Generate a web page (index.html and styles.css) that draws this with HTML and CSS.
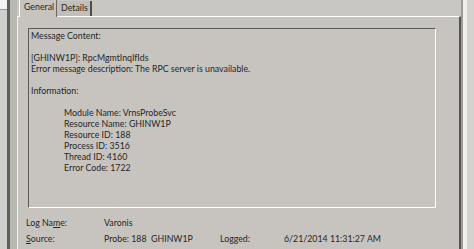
FILE: index.html
```html
<!DOCTYPE html>
<html>
<head>
<meta charset="utf-8">
<link rel="stylesheet" href="styles.css">
</head>
<body>
<div class="window">
  <div class="frame-left">
    <div class="corner"></div>
  </div>
  <div class="frame-dark"></div>
  <div class="frame-grey"></div>
  <div class="tabctl">
    <div class="tabs">
      <div class="tab tab-active">General</div>
      <div class="tab tab-idle">Details</div>
    </div>
    <div class="page">
      <div class="group">
        <div class="line">Message Content:</div>
        <div class="line blank"></div>
        <div class="line">[GHINW1P]: RpcMgmtInqIfIds</div>
        <div class="line">Error message description: The RPC server is unavailable.</div>
        <div class="line blank"></div>
        <div class="line">Information:</div>
        <div class="line blank"></div>
        <div class="info">
          <div class="line">Module Name: VrnsProbeSvc</div>
          <div class="line">Resource Name: GHINW1P</div>
          <div class="line">Resource ID: 188</div>
          <div class="line">Process ID: 3516</div>
          <div class="line">Thread ID: 4160</div>
          <div class="line">Error Code: 1722</div>
        </div>
      </div>
      <div class="meta">
        <div class="label">Log Na<u>m</u>e:</div>
        <div class="value">Varonis</div>
        <div></div>
        <div></div>
        <div class="label"><u>S</u>ource:</div>
        <div class="value">Probe: 188&nbsp;&nbsp;GHINW1P</div>
        <div class="label">Logged:</div>
        <div class="value">6/21/2014 11:31:27 AM</div>
      </div>
    </div>
  </div>
  <div class="frame-r1"></div>
  <div class="frame-r2"></div>
  <div class="frame-r3"></div>
</div>
</body>
</html>
```

FILE: styles.css
```css
html, body {
  margin: 0;
  padding: 0;
}
body {
  width: 474px;
  height: 249px;
  overflow: hidden;
  background: #c7c4bf;
  font-family: Lato, "Open Sans", sans-serif;
  font-size: 8.8px;
  color: #262626;
}
.window {
  display: flex;
  height: 249px;
}
.frame-left {
  width: 7px;
  background: #cfcfcd;
}
.corner {
  height: 9px;
  background: #f4f4f4;
  border-bottom: 1px solid #9a9a9a;
}
.frame-dark {
  width: 3px;
  background: #5e5e5c;
}
.frame-grey {
  width: 7px;
  background: #b9b7b2;
}
.tabctl {
  width: 444px;
  display: flex;
  flex-direction: column;
}
.tabs {
  height: 16px;
  display: flex;
  padding-left: 2px;
  background: #c9c7c3;
}
.tab {
  box-sizing: border-box;
  line-height: 14px;
}
.tab-active {
  width: 38px;
  height: 17px;
  padding-left: 4px;
  background: #c7c4bf;
  border-left: 1px solid #ffffff;
  border-right: 1px solid #6c6a66;
  position: relative;
  z-index: 1;
}
.tab-idle {
  width: 35px;
  height: 16px;
  margin-top: 1px;
  padding-left: 4px;
  background: #c2bfba;
  border-right: 2px solid #4e4d4a;
  border-bottom: 1px solid #ffffff;
}
.page {
  flex: 1;
  border-top: 1px solid #ffffff;
  border-left: 1px solid #f2f2f0;
  border-right: 2px solid #55534f;
  display: flex;
  flex-direction: column;
}
.group {
  box-sizing: border-box;
  margin: 11px 0 0 10px;
  width: 408px;
  height: 180px;
  border-top: 1px solid #5c5a56;
  border-left: 1px solid #5c5a56;
  border-right: 1px solid #ffffff;
  border-bottom: 1px solid #ffffff;
  padding: 1px 0 0 2px;
}
.line {
  height: 11px;
  line-height: 11px;
  white-space: nowrap;
}
.info {
  margin-left: 33px;
}
.meta {
  display: grid;
  grid-template-columns: 78px 116px 64px 120px;
  grid-auto-rows: 16px;
  line-height: 16px;
  margin: 7px 0 0 8px;
}
.meta u {
  text-decoration-thickness: 1px;
  text-underline-offset: 1px;
}
.frame-r1 {
  width: 2px;
  background: #9d9b97;
}
.frame-r2 {
  width: 4px;
  background: #efefed;
}
.frame-r3 {
  width: 7px;
  background: #d3d2cf;
}
```
